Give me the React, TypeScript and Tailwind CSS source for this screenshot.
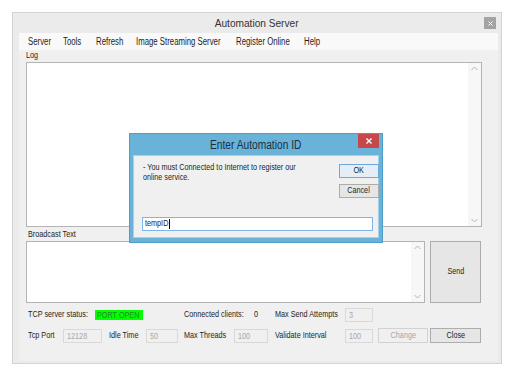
import React from "react";

const font = { fontFamily: '"Liberation Sans", Arial, sans-serif' };

function T({ children, c = "" }: { children: React.ReactNode; c?: string }) {
  return <span className={`inline-block whitespace-nowrap origin-left scale-x-[0.78] ${c}`}>{children}</span>;
}
function TC({ children, c = "" }: { children: React.ReactNode; c?: string }) {
  return <span className={`inline-block whitespace-nowrap origin-center scale-x-[0.78] ${c}`}>{children}</span>;
}

function ScrollArrows() {
  return (
    <div className="w-[13px] h-full bg-[#f7f7f7] flex flex-col justify-between items-center py-[3px]">
      <svg width="7" height="5" viewBox="0 0 7 5"><path d="M0.5 4 L3.5 1 L6.5 4" fill="none" stroke="#b5b5b5" strokeWidth="1" /></svg>
      <svg width="7" height="5" viewBox="0 0 7 5"><path d="M0.5 1 L3.5 4 L6.5 1" fill="none" stroke="#b5b5b5" strokeWidth="1" /></svg>
    </div>
  );
}

function DisInput({ value, w }: { value: string; w: string }) {
  return (
    <div className={`${w} h-[14px] bg-[#f0f0f0] border border-[#d9d9d9] text-[#a8a8a8] text-[9.3px] leading-[12px] pl-[3px]`}>
      <T>{value}</T>
    </div>
  );
}

export default function App() {
  return (
    <div className="w-[512px] h-[380px] bg-white relative pt-[12px] pl-[12px]" style={font}>
      {/* main window */}
      <div className="w-[490px] h-[352px] border border-[#d3d3d3] bg-[#ebebeb] flex flex-col">
        <div className="h-[20px] relative flex items-center justify-center">
          <span className="inline-block whitespace-nowrap origin-center scale-x-[0.88] text-[11.5px] text-[#333333] leading-none mt-[2px]">Automation Server</span>
          <div className="absolute right-[5px] top-[4px] w-[12px] h-[12px] bg-[#a3a3a3] flex items-center justify-center">
            <svg width="5" height="5" viewBox="0 0 5 5"><path d="M0.5 0.5 L4.5 4.5 M4.5 0.5 L0.5 4.5" stroke="white" strokeWidth="1" /></svg>
          </div>
        </div>
        <div className="flex-1 ml-[6px] mr-[3px] mb-[2px] bg-[#f0f0f0] flex flex-col">
          {/* menu */}
          <div className="h-[17px] bg-[#f9f9f9] flex items-center pl-[9px] text-[10px] text-[#1e1e1e]">
            <div className="w-[35px]"><T>Server</T></div>
            <div className="w-[33px]"><T>Tools</T></div>
            <div className="w-[40px]"><T>Refresh</T></div>
            <div className="w-[100px]"><T>Image Streaming Server</T></div>
            <div className="w-[68px]"><T>Register Online</T></div>
            <div><T>Help</T></div>
          </div>
          <div className="h-[12px] pl-[7px] text-[9.3px] leading-[11px] text-[#1e1e1e]"><T>Log</T></div>
          <div className="ml-[7px] w-[456px] h-[165px] bg-white border border-[#b4b4b4] flex justify-end">
            <ScrollArrows />
          </div>
          <div className="h-[14px] pl-[9px] text-[9.3px] leading-[15px] text-[#1e1e1e]"><T>Broadcast Text</T></div>
          <div className="ml-[7px] flex gap-[5px] h-[62px]">
            <div className="w-[399px] h-full bg-white border border-[#b4b4b4] flex justify-end">
              <ScrollArrows />
            </div>
            <div className="w-[51px] h-full bg-[#e6e6e6] border border-[#adadad] flex items-center justify-center text-[9.3px] text-[#1e1e1e]"><TC>Send</TC></div>
          </div>
          {/* row 1 */}
          <div className="ml-[7px] mt-[5px] h-[14px] flex items-center text-[9.3px] text-[#1e1e1e]">
            <div className="ml-[2px] w-[67px]"><T>TCP server status:</T></div>
            <div className="w-[48px] h-[10px] bg-[#00ff00] text-[#2a852a] leading-[10px] pl-[2px]"><T>PORT OPEN</T></div>
            <div className="ml-[41px] w-[70px]"><T>Connected clients:</T></div>
            <div className="w-[21px]"><T>0</T></div>
            <div className="w-[70px]"><T>Max Send Attempts</T></div>
            <DisInput value="3" w="w-[28px]" />
          </div>
          {/* row 2 */}
          <div className="ml-[7px] mt-[6px] h-[15px] flex items-center text-[9.3px] text-[#1e1e1e]">
            <div className="ml-[2px] w-[35px]"><T>Tcp Port</T></div>
            <DisInput value="12128" w="w-[39px]" />
            <div className="ml-[7px] w-[37px]"><T>Idle Time</T></div>
            <DisInput value="50" w="w-[32px]" />
            <div className="ml-[6px] w-[50px]"><T>Max Threads</T></div>
            <DisInput value="100" w="w-[34px]" />
            <div className="ml-[7px] w-[70px]"><T>Validate Interval</T></div>
            <DisInput value="100" w="w-[28px]" />
            <div className="ml-[5px] w-[50px] h-[15px] bg-[#f0f0f0] border border-[#d2d2d2] text-[#a6a6a6] flex items-center justify-center"><TC>Change</TC></div>
            <div className="ml-[2px] w-[51px] h-[15px] bg-[#e6e6e6] border border-[#adadad] flex items-center justify-center"><TC>Close</TC></div>
          </div>
        </div>
      </div>

      {/* dialog */}
      <div className="absolute left-[129px] top-[133px] w-[254px] h-[110px] bg-[#6ab3d8] border border-[#4d9dca] flex flex-col" style={font}>
        <div className="h-[21px] relative flex items-center justify-center">
          <span className="inline-block whitespace-nowrap origin-center scale-x-[0.85] text-[12px] text-[#1b2e3d] leading-none mt-[1px]">Enter Automation ID</span>
          <div className="absolute right-[3px] top-0 w-[21px] h-[14px] bg-[#c7484b] flex items-center justify-center">
            <svg width="6" height="6" viewBox="0 0 6 6"><path d="M0.5 0.5 L5.5 5.5 M5.5 0.5 L0.5 5.5" stroke="white" strokeWidth="1.4" /></svg>
          </div>
        </div>
        <div className="flex-1 mx-[3px] mb-[4px] bg-[#f0f0f0] border border-[#a5cfe6] flex flex-col">
          <div className="flex">
            <div className="flex-1 pl-[9px] pt-[7px] text-[9.3px] leading-[9.5px] text-[#1e1e1e]">
              <div><T>- You must Connected to Internet to register our</T></div>
              <div><T>online service.</T></div>
            </div>
            <div className="flex flex-col gap-[6px] pt-[8px] pr-[2px]">
              <div className="w-[40px] h-[14px] bg-[#e5eef7] border border-[#6fa8dc] flex items-center justify-center text-[9.3px] text-[#1e1e1e]"><TC>OK</TC></div>
              <div className="w-[40px] h-[14px] bg-[#e6e6e6] border border-[#adadad] flex items-center justify-center text-[9.3px] text-[#1e1e1e]"><TC>Cancel</TC></div>
            </div>
          </div>
          <div className="mt-auto mb-[6px] ml-[8px] mr-[5px] h-[14px] bg-white border border-[#7eb4ea] flex items-center pl-[2px] text-[9.3px] text-[#1e1e1e]">
            <T>tempID</T>
            <span className="-ml-[6px] w-[1px] h-[10px] bg-black"></span>
          </div>
        </div>
      </div>
    </div>
  );
}
